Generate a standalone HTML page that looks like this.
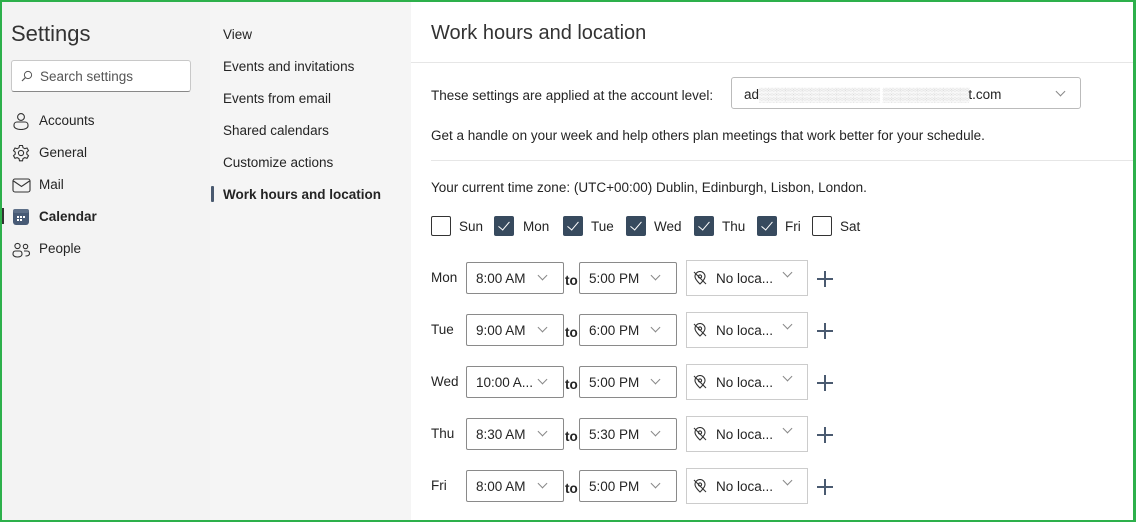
<!DOCTYPE html>
<html><head><style>
*{box-sizing:border-box;margin:0;padding:0}
body{width:1136px;height:522px;overflow:hidden;font-family:"Liberation Sans",sans-serif;color:#242424;font-size:13.5px;background:#fff}
.frame{position:absolute;left:0;top:0;width:1136px;height:522px;border:2px solid #2db04b;border-right-width:3px}
.left{position:absolute;left:2px;top:2px;width:208px;height:518px;background:#f3f3f3}
.mid{position:absolute;left:210px;top:2px;width:201px;height:518px;background:#f5f5f5}
.a{position:absolute;white-space:nowrap}
.t{margin-top:1px}
.sel{position:absolute;height:32px;border:1px solid #8a8a8a;border-radius:2px;background:#fff;padding:8px 0 0 9px;font-size:13.5px}
.chev{position:absolute;width:7px;height:7px;border-right:1px solid #888;border-bottom:1px solid #888;transform:rotate(45deg)}
.cb{position:absolute;top:216px;width:20px;height:20px;border-radius:2px}
.cb.on{background:#374a5e}
.cb.off{border:1px solid #333;background:#fff}
.cb.on::after{content:"";position:absolute;left:7px;top:3px;width:5px;height:10px;border-right:1.5px solid #fff;border-bottom:1.5px solid #fff;transform:rotate(40deg)}
.plus{position:absolute;width:16px;height:16px}
.plus::before{content:"";position:absolute;left:0;top:7px;width:16px;height:1.5px;background:#4a5a70}
.plus::after{content:"";position:absolute;left:7px;top:0;width:1.5px;height:16px;background:#4a5a70}
</style></head><body>
<div class="left"></div><div class="mid"></div>
<div class="a" style="left:11px;top:21px;font-size:22px;color:#333">Settings</div>
<div class="a" style="left:11px;top:60px;width:180px;height:32px;background:#fff;border:1px solid #c8c8c8;border-bottom-color:#888;border-radius:3px"></div>
<svg class="a" style="left:21px;top:70px" width="12" height="12" viewBox="0 0 12 12"><circle cx="7" cy="5" r="3.6" fill="none" stroke="#555" stroke-width="1"/><path d="M4.4 7.6 1 11" stroke="#555" stroke-width="1.2"/></svg>
<div class="a t" style="left:40px;top:68px;color:#555">Search settings</div>
<svg class="a" style="left:12px;top:112px" width="18" height="18" viewBox="0 0 18 18" fill="none" stroke="#333" stroke-width="1.1"><circle cx="9" cy="5" r="3.4"/><path d="M2 13c0-2 1.5-3 3-3h8c1.5 0 3 1 3 3v1c0 2-3 3.5-7 3.5S2 16 2 14z"/></svg>
<div class="a t" style="left:39px;top:112px">Accounts</div>
<svg class="a" style="left:12px;top:144px" width="18" height="18" viewBox="0 0 18 18" fill="none" stroke="#333" stroke-width="1.1"><circle cx="9" cy="9" r="2.6"/><path d="M7.5 1.5h3l.5 2.2 1.8 1 2.2-.7 1.5 2.6-1.7 1.5v2l1.7 1.6-1.5 2.6-2.2-.7-1.8 1-.5 2.2h-3l-.5-2.2-1.8-1-2.2.7-1.5-2.6 1.7-1.6v-2L1.5 6.6 3 4l2.2.7 1.8-1z"/></svg>
<div class="a t" style="left:39px;top:144px">General</div>
<svg class="a" style="left:12px;top:178px" width="19" height="15" viewBox="0 0 19 15" fill="none" stroke="#333" stroke-width="1.1"><rect x="1" y="1" width="17" height="13" rx="2"/><path d="M1.5 3l8 5.5 8-5.5"/></svg>
<div class="a t" style="left:39px;top:176px">Mail</div>
<div class="a" style="left:2px;top:208px;width:2px;height:16px;background:#333"></div>
<svg class="a" style="left:13px;top:209px" width="16" height="16" viewBox="0 0 16 16"><rect x="0" y="0" width="16" height="16" rx="3" fill="#475a75"/><rect x="0" y="0" width="16" height="4" rx="2" fill="#5d6f88"/><g fill="#fff"><rect x="4" y="7" width="2" height="2"/><rect x="7" y="7" width="2" height="2"/><rect x="10" y="7" width="2" height="2"/><rect x="4" y="10" width="2" height="2"/><rect x="7" y="10" width="2" height="2"/></g></svg>
<div class="a t" style="left:39px;top:208px;font-weight:bold">Calendar</div>
<svg class="a" style="left:12px;top:242px" width="19" height="16" viewBox="0 0 19 16" fill="none" stroke="#333" stroke-width="1.1"><circle cx="5.5" cy="4" r="2.6"/><circle cx="13.5" cy="4.5" r="2.2"/><path d="M1 12c0-2 1-3 2.5-3h4c1.5 0 2.5 1 2.5 3s-2 3-4.5 3S1 14 1 12zM12 9h3c1.5 0 2.5 1 2.5 2.5S16 14 13.5 14"/></svg>
<div class="a t" style="left:39px;top:240px">People</div>

<div class="a t" style="left:223px;top:26px">View</div>
<div class="a t" style="left:223px;top:58px">Events and invitations</div>
<div class="a t" style="left:223px;top:90px">Events from email</div>
<div class="a t" style="left:223px;top:122px">Shared calendars</div>
<div class="a t" style="left:223px;top:154px">Customize actions</div>
<div class="a" style="left:211px;top:186px;width:3px;height:16px;background:#4a5a70;border-radius:1px"></div>
<div class="a t" style="left:223px;top:186px;font-weight:bold">Work hours and location</div>

<div class="a" style="left:431px;top:22px;font-size:20px;color:#333">Work hours and location</div>
<div class="a" style="left:411px;top:62px;width:722px;height:1px;background:#e6e6e6"></div>
<div class="a t" style="left:431px;top:87px">These settings are applied at the account level:</div>
<div class="a" style="left:731px;top:77px;width:350px;height:32px;border:1px solid #bbb;border-radius:3px"></div>
<div class="a t" style="left:744px;top:86px">ad<span style="color:#ccc;letter-spacing:-1px">▒▒▒▒▒▒▒▒▒▒▒▒▒▒</span> <span style="color:#ccc;letter-spacing:-1px">▒▒▒▒▒▒▒▒▒▒</span>t.com</div>
<div class="chev" style="left:1057px;top:88px"></div>
<div class="a t" style="left:431px;top:127px">Get a handle on your week and help others plan meetings that work better for your schedule.</div>
<div class="a" style="left:431px;top:160px;width:702px;height:1px;background:#e6e6e6"></div>
<div class="a t" style="left:431px;top:179px">Your current time zone: (UTC+00:00) Dublin, Edinburgh, Lisbon, London.</div>

<div class="cb off" style="left:431px"></div><div class="a t" style="left:459px;top:218px">Sun</div>
<div class="cb on" style="left:494px"></div><div class="a t" style="left:523px;top:218px">Mon</div>
<div class="cb on" style="left:563px"></div><div class="a t" style="left:591px;top:218px">Tue</div>
<div class="cb on" style="left:626px"></div><div class="a t" style="left:654px;top:218px">Wed</div>
<div class="cb on" style="left:694px"></div><div class="a t" style="left:722px;top:218px">Thu</div>
<div class="cb on" style="left:757px"></div><div class="a t" style="left:785px;top:218px">Fri</div>
<div class="cb off" style="left:812px"></div><div class="a t" style="left:840px;top:218px">Sat</div>

<div id="rows"></div>
<script>
var d=[["Mon","8:00 AM","5:00 PM"],["Tue","9:00 AM","6:00 PM"],["Wed","10:00 A...","5:00 PM"],["Thu","8:30 AM","5:30 PM"],["Fri","8:00 AM","5:00 PM"]];
var h="";
d.forEach(function(r,i){var y=262+i*52;
h+='<div class="a t" style="left:431px;top:'+(y+7)+'px">'+r[0]+'</div>';
h+='<div class="sel" style="left:466px;top:'+y+'px;width:98px">'+r[1]+'<div class="chev" style="left:72px;top:9px"></div></div>';
h+='<div class="a" style="left:565px;top:'+(y+11)+'px;font-weight:bold">to</div>';
h+='<div class="sel" style="left:579px;top:'+y+'px;width:98px">'+r[2]+'<div class="chev" style="left:72px;top:9px"></div></div>';
h+='<div class="a" style="left:686px;top:'+(y-2)+'px;width:122px;height:36px;border:1px solid #ccc"></div>';
h+='<svg class="a" style="left:693px;top:'+(y+9)+'px" width="14" height="14" viewBox="0 0 14 14" fill="none" stroke="#333" stroke-width="1.1"><path d="M7 13S2 8.5 2 5.5a5 5 0 0 1 10 0C12 8.5 7 13 7 13z"/><circle cx="7" cy="5.5" r="1.6"/><path d="M1 1l12 12"/></svg>';
h+='<div class="a" style="left:716px;top:'+(y+9)+'px">No loca...</div>';
h+='<div class="chev" style="left:784px;top:'+(y+7)+'px"></div>';
h+='<div class="plus" style="left:817px;top:'+(y+9)+'px"></div>';
});
document.getElementById("rows").innerHTML=h;
</script>
<div class="frame"></div>
</body></html>
